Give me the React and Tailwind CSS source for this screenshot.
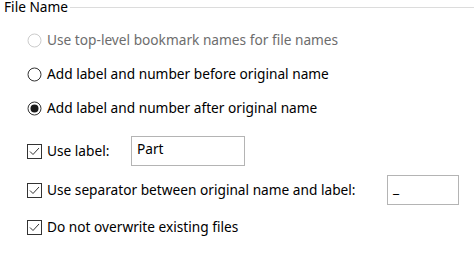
function Radio({ checked, disabled }) {
    return (
        <svg width="15" height="15" viewBox="0 0 15 15" className="shrink-0">
            <circle cx="7.5" cy="7.5" r="6.5" fill="white" stroke={disabled ? '#cccccc' : '#333333'} strokeWidth="1" />
            {checked && <circle cx="7.5" cy="7.5" r="4" fill="#1a1a1a" />}
        </svg>
    );
}

function Check() {
    return (
        <svg width="15" height="15" viewBox="0 0 15 15" className="shrink-0">
            <rect x="0.5" y="0.5" width="14" height="14" fill="white" stroke="#333333" strokeWidth="1" />
            <polyline points="3,7.5 6,10.5 12,4" fill="none" stroke="#333333" strokeWidth="1" />
        </svg>
    );
}

export default function App() {
    return (
        <div
            className="w-[474px] h-[253px] overflow-hidden bg-white text-[13.7px] text-black"
            style={{ fontFamily: '"Noto Sans", "Liberation Sans", sans-serif' }}
        >
            {/* group box header */}
            <div className="flex items-center -mt-[3px] h-[19px] pl-[4px]">
                <span className="leading-[19px]">File Name</span>
                <div className="flex-1 h-px bg-[#dcdcdc] ml-[2px] mt-[1px]" />
            </div>

            <div className="flex flex-col pl-[27px]">
                <div className="flex items-center gap-[5px] h-[20px] mt-[14px]">
                    <Radio disabled />
                    <span className="text-[#6d6d6d]">Use top-level bookmark names for file names</span>
                </div>

                <div className="flex items-center gap-[5px] h-[20px] mt-[14px]">
                    <Radio />
                    <span>Add label and number before original name</span>
                </div>

                <div className="flex items-center gap-[5px] h-[20px] mt-[14px]">
                    <Radio checked />
                    <span>Add label and number after original name</span>
                </div>

                <div className="flex items-center gap-[5px] h-[30px] mt-[18px]">
                    <Check />
                    <span className="w-[79px]">Use label:</span>
                    <div className="w-[114px] h-[30px] border border-[#b4b4b4] px-[5px] pt-[3px] leading-[17px]">Part</div>
                </div>

                <div className="flex items-center gap-[5px] h-[30px] mt-[9px]">
                    <Check />
                    <span className="w-[335px]">Use separator between original name and label:</span>
                    <div className="w-[72px] h-[30px] border border-[#b4b4b4] px-[5px] pt-[3px] leading-[17px]">_</div>
                </div>

                <div className="flex items-center gap-[5px] h-[20px] mt-[12px]">
                    <Check />
                    <span>Do not overwrite existing files</span>
                </div>
            </div>
        </div>
    );
}
